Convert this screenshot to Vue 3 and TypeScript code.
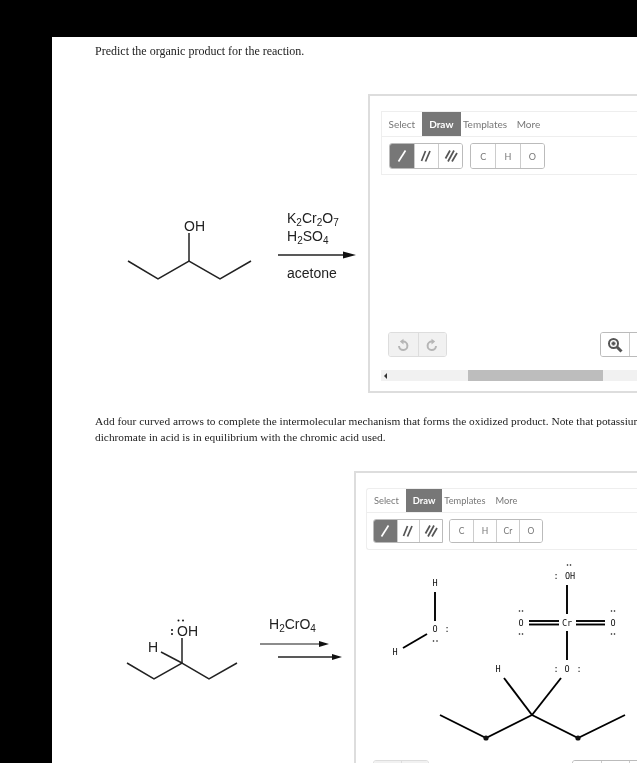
<script setup lang="ts">
const tabs = ['Select', 'Draw', 'Templates', 'More']
const atomsTop = ['C', 'H', 'O']
const atomsBottom = ['C', 'H', 'Cr', 'O']
const bondLines = [
  ['M4.5 13.5 L11.5 2.5'],
  ['M3.5 13 L7.5 3', 'M7.5 13.5 L12 3'],
  ['M2.5 10.5 L7 2.5', 'M5 13.5 L11 2.5', 'M9 13.5 L14 5'],
]
</script>

<template>
  <div class="page">
    <div class="sheet">
      <p class="question first">Predict the organic product for the reaction.</p>

      <div class="row one">
        <svg class="scheme" width="316" height="298" viewBox="52 94 316 298">
          <g class="bond">
            <polyline points="128,261 158,279 189,261 220,279 251,261" />
            <line x1="189" y1="233" x2="189" y2="261" />
            <line x1="278" y1="255" x2="345" y2="255" />
          </g>
          <polygon class="head" points="343,251.5 356,255 343,258.5" />
          <text x="184" y="231">OH</text>
          <text x="287" y="223">K<tspan class="sub" dy="3">2</tspan><tspan dy="-3">Cr</tspan><tspan class="sub" dy="3">2</tspan><tspan dy="-3">O</tspan><tspan class="sub" dy="3">7</tspan></text>
          <text x="287" y="241">H<tspan class="sub" dy="3">2</tspan><tspan dy="-3">SO</tspan><tspan class="sub" dy="3">4</tspan></text>
          <text x="287" y="278">acetone</text>
        </svg>

        <section class="editor">
          <div class="toolbar">
            <div class="tabs">
              <span v-for="tab in tabs" :key="tab" class="tab" :class="{ active: tab === 'Draw' }">{{ tab }}</span>
            </div>
            <div class="tools">
              <div class="group">
                <span v-for="(lines, i) in bondLines" :key="i" class="tool" :class="{ on: i === 0 }">
                  <svg width="16" height="16" viewBox="0 0 16 16"><path v-for="d in lines" :key="d" :d="d" /></svg>
                </span>
              </div>
              <div class="group atoms">
                <span v-for="atom in atomsTop" :key="atom" class="tool">{{ atom }}</span>
              </div>
            </div>
          </div>
          <div class="canvas"></div>
          <div class="footer">
            <div class="group muted">
              <span class="tool">
                <svg width="14" height="14" viewBox="0 0 14 14"><path d="M3 8 A4.2 4.2 0 1 0 7 3.6" /><path class="fill" d="M7.5 .8 V6.4 L3.8 3.6 Z" /></svg>
              </span>
              <span class="tool">
                <svg width="14" height="14" viewBox="0 0 14 14"><path d="M11 8 A4.2 4.2 0 1 1 7 3.6" /><path class="fill" d="M6.5 .8 V6.4 L10.2 3.6 Z" /></svg>
              </span>
            </div>
            <div class="group zoom">
              <span class="tool">
                <svg width="16" height="16" viewBox="0 0 16 16"><circle cx="6.5" cy="6.5" r="4.5" /><path class="thick" d="M10 10 L14.5 14.5" /><path d="M4.5 6.5 H8.5 M6.5 4.5 V8.5" /></svg>
              </span>
              <span class="tool">
                <svg width="16" height="16" viewBox="0 0 16 16"><circle cx="6.5" cy="6.5" r="4.5" /><path class="thick" d="M10 10 L14.5 14.5" /><path d="M4.5 6.5 H8.5" /></svg>
              </span>
            </div>
          </div>
          <div class="scrollbar">
            <i class="arrow"></i>
            <i class="thumb"></i>
          </div>
        </section>
      </div>

      <p class="question second">
        Add four curved arrows to complete the intermolecular mechanism that forms the oxidized product. Note that potassium<br />
        dichromate in acid is in equilibrium with the chromic acid used.
      </p>

      <div class="row two">
        <svg class="scheme" width="302" height="292" viewBox="52 471 302 292">
          <g class="bond">
            <polyline points="127,663 154,679 182,663 209,679 237,663" />
            <line x1="182" y1="638" x2="182" y2="663" />
            <line x1="161" y1="652" x2="182" y2="663" />
            <line class="grey" x1="260" y1="644" x2="320" y2="644" />
            <line x1="278" y1="657" x2="334" y2="657" />
          </g>
          <polygon class="head" points="319,641 329,644 319,647" />
          <polygon class="head" points="332,654 342,657 332,660" />
          <text x="177" y="636">OH</text>
          <text x="148" y="652">H</text>
          <g class="head">
            <circle cx="178.5" cy="620.5" r="1" /><circle cx="183" cy="620.5" r="1" />
            <circle cx="172" cy="630" r="1" /><circle cx="172" cy="634" r="1" />
          </g>
          <text x="269" y="629">H<tspan class="sub" dy="3">2</tspan><tspan dy="-3">CrO</tspan><tspan class="sub" dy="3">4</tspan></text>
        </svg>

        <section class="editor small">
          <div class="toolbar">
            <div class="tabs">
              <span v-for="tab in tabs" :key="tab" class="tab" :class="{ active: tab === 'Draw' }">{{ tab }}</span>
            </div>
            <div class="tools">
              <div class="group square">
                <span v-for="(lines, i) in bondLines" :key="i" class="tool" :class="{ on: i === 0 }">
                  <svg width="16" height="16" viewBox="0 0 16 16"><path v-for="d in lines" :key="d" :d="d" /></svg>
                </span>
              </div>
              <div class="group atoms">
                <span v-for="atom in atomsBottom" :key="atom" class="tool">{{ atom }}</span>
              </div>
            </div>
          </div>
          <svg class="molecule" width="283" height="210" viewBox="356 550 283 210">
            <g class="bond heavy">
              <line x1="435" y1="592" x2="435" y2="621" />
              <line x1="403" y1="648" x2="427" y2="634" />
              <line x1="567" y1="585" x2="567" y2="614" />
              <line x1="567" y1="631" x2="567" y2="660" />
              <line x1="529" y1="621" x2="559" y2="621" />
              <line x1="529" y1="624.5" x2="559" y2="624.5" />
              <line x1="576" y1="621" x2="605" y2="621" />
              <line x1="576" y1="624.5" x2="605" y2="624.5" />
              <line x1="504" y1="678" x2="532" y2="715" />
              <line x1="561" y1="678" x2="532" y2="715" />
              <polyline points="440,715 486,738 532,715 578,738 625,715" />
            </g>
            <circle class="head" cx="486" cy="738" r="2.6" />
            <circle class="head" cx="578" cy="738" r="2.6" />
            <g class="atom">
              <text x="435" y="586">H</text>
              <text x="435" y="632">O</text>
              <text x="447" y="632">:</text>
              <text x="395" y="655">H</text>
              <text x="570" y="579">OH</text>
              <text x="556" y="579">:</text>
              <text x="567" y="626">Cr</text>
              <text x="521" y="626">O</text>
              <text x="613" y="626">O</text>
              <text x="567" y="672">O</text>
              <text x="556" y="672">:</text>
              <text x="579" y="672">:</text>
              <text x="498" y="672">H</text>
            </g>
            <g class="head">
              <circle cx="433.5" cy="641" r=".8" /><circle cx="437" cy="641" r=".8" />
              <circle cx="567.5" cy="565" r=".8" /><circle cx="570.5" cy="565" r=".8" />
              <circle cx="519.5" cy="611" r=".8" /><circle cx="522.5" cy="611" r=".8" />
              <circle cx="519.5" cy="634" r=".8" /><circle cx="522.5" cy="634" r=".8" />
              <circle cx="611.5" cy="611" r=".8" /><circle cx="614.5" cy="611" r=".8" />
              <circle cx="611.5" cy="634" r=".8" /><circle cx="614.5" cy="634" r=".8" />
            </g>
          </svg>
          <div class="footer">
            <div class="group muted"><span class="tool"></span><span class="tool"></span></div>
            <div class="group zoom"><span class="tool"></span><span class="tool"></span><span class="tool"></span></div>
          </div>
        </section>
      </div>
    </div>
  </div>
</template>

<style>
body {
  background: #000;
}
</style>

<style scoped>
.page {
  height: 763px;
  overflow: hidden;
  padding-top: 37px;
  box-sizing: border-box;
  background: #000;
}

.sheet {
  margin-left: 52px;
  height: 726px;
  overflow: hidden;
  background: #fff;
  filter: blur(0.35px);
}

.question {
  margin: 0;
  padding-left: 43px;
  font-family: "Liberation Serif", serif;
  font-size: 12px;
  line-height: 16px;
  color: #222;
  white-space: nowrap;
}

.first {
  padding-top: 6px;
  height: 51px;
}

.second {
  padding-top: 20px;
  height: 58px;
  font-size: 11.37px;
}

.row {
  display: flex;
  align-items: flex-start;
}

.scheme {
  flex: none;
  display: block;
}

.scheme text {
  font-family: "Liberation Sans", Arial, sans-serif;
  font-size: 14px;
  fill: #222;
}

.scheme .sub {
  font-size: 10px;
}

.bond {
  fill: none;
  stroke: #222;
  stroke-width: 1.5;
}

.bond .grey {
  stroke: #666;
}

.head {
  fill: #111;
}

.editor {
  flex: none;
  width: 320px;
  height: 299px;
  box-sizing: border-box;
  padding: 15px 0 0 11px;
  border: 2px solid #ddd;
  font-family: Lato, "Open Sans", sans-serif;
  color: #777;
}

.toolbar {
  border: 1px solid #eee;
  border-right: 0;
  height: 64px;
  box-sizing: border-box;
}

.tabs {
  display: flex;
  height: 24px;
  border-bottom: 1px solid #eee;
  font-size: 10px;
}

.tab {
  display: flex;
  align-items: center;
  padding: 0 6.5px;
}

.tab.active {
  background: #777;
  color: #fff;
  font-weight: 700;
  padding: 0 7.5px;
}

.active + .tab {
  padding: 0 3px 0 2px;
}

.tools {
  display: flex;
  gap: 6.5px;
  padding: 6px 6.5px;
}

.group {
  display: flex;
  height: 26px;
  border: 1px solid #bbb;
  border-radius: 3px;
  overflow: hidden;
  box-sizing: border-box;
  flex: none;
}

.tool {
  width: 24.33px;
  display: flex;
  align-items: center;
  justify-content: center;
  border-left: 1px solid #ccc;
  box-sizing: border-box;
  font-size: 9px;
  background: #fff;
}

.tool:first-child {
  border-left: 0;
}

.tool.on {
  background: #777;
}

.tool svg {
  fill: none;
  stroke: #555;
  stroke-width: 1.7;
}

.tool.on svg {
  stroke: #fff;
}

.canvas {
  height: 157px;
}

.footer {
  display: flex;
  padding-left: 7px;
}

.muted {
  border-color: #ddd;
  height: 25px;
}

.muted .tool {
  width: 28.5px;
  background: #f1f1f1;
  border-color: #ddd;
}

.muted svg {
  stroke: #b5b5b5;
  stroke-width: 2;
}

.muted svg .fill {
  fill: #b5b5b5;
  stroke: none;
}

.zoom {
  height: 25px;
  margin-left: 153px;
}

.zoom .tool {
  width: 28px;
  flex: none;
}

.zoom svg {
  stroke: #555;
  stroke-width: 2;
}

.zoom svg .thick {
  stroke-width: 3;
}

.scrollbar {
  position: relative;
  margin-top: 13px;
  height: 11px;
  width: 320px;
  background: #f1f1f1;
}

.arrow {
  position: absolute;
  left: 3px;
  top: 3px;
  border: 3px solid transparent;
  border-left: 0;
  border-right: 3px solid #333;
}

.thumb {
  position: absolute;
  left: 87px;
  top: 0;
  width: 135px;
  height: 100%;
  background: #bdbdbd;
}

.editor.small {
  height: 310px;
  padding: 15px 0 0 10px;
}

.small .toolbar {
  height: 62px;
  border-radius: 3px 0 0 3px;
}

.small .tabs {
  height: 23px;
  font-size: 9.3px;
}

.small .tab {
  padding: 0 7px;
}

.small .active + .tab {
  padding: 0 3px 0 2px;
}

.small .tools {
  padding: 6px;
  gap: 6px;
}

.small .tools .group {
  height: 24px;
}

.small .tools .tool {
  width: 22.67px;
  font-size: 8.5px;
}

.small .tools .atoms .tool {
  width: 23px;
}

.small .square {
  border-radius: 3px 0 0 3px;
}

.molecule {
  display: block;
  margin-left: -10px;
}

.molecule .heavy {
  stroke: #000;
  stroke-width: 1.9;
}

.atom text {
  font-family: "DejaVu Sans Mono", monospace;
  font-size: 8.5px;
  text-anchor: middle;
  fill: #111;
}

.small .footer {
  padding-left: 7px;
}

.small .muted .tool {
  width: 27px;
}

.small .zoom {
  margin-left: 143px;
}
</style>
